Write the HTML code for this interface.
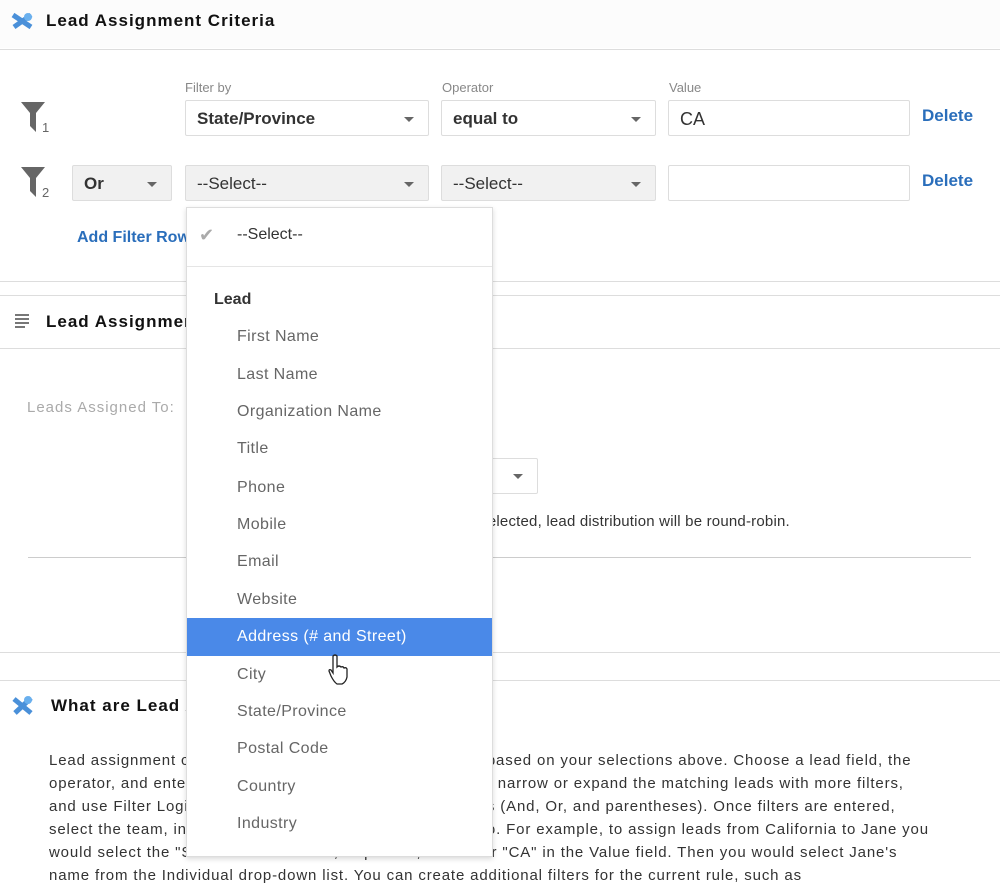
<!DOCTYPE html>
<html><head><style>
body{margin:0;width:1000px;height:877px;overflow:hidden;background:#fff;font-family:"Liberation Sans",Arial,sans-serif;position:relative}
.a{position:absolute}
.hr{position:absolute;left:0;width:1000px;height:1px;background:#ddd}
.sel{position:absolute;height:36px;border:1px solid #ddd;border-radius:2px;box-sizing:border-box;font-size:17px;font-weight:bold;color:#333;padding:8px 11px;background:#fff}
.sel.g{background:#f1f1f1;font-weight:normal;color:#333}
.car{position:absolute;right:14px;top:16px;width:0;height:0;border-left:5px solid transparent;border-right:5px solid transparent;border-top:5px solid #666}
.lbl{position:absolute;font-size:13px;color:#888}
.del{position:absolute;font-size:17px;font-weight:bold;color:#2a6ebb}
.h{position:absolute;font-size:17px;font-weight:bold;color:#111;letter-spacing:1px}
.it{position:absolute;left:50px;font-size:16px;color:#666;letter-spacing:0.4px}
p{margin:0;white-space:nowrap}
</style></head><body>
<div class="a" style="left:0;top:0;width:1000px;height:48px;background:#fcfcfc"></div>
<svg class="a" style="left:11px;top:11px" width="24" height="20"><path d="M2 4 L20 16 M20 4 L3 16" stroke="#4a90d9" stroke-width="5"/><circle cx="17" cy="6" r="4" fill="#6ab0ee"/></svg>
<div class="h" style="left:46px;top:11px">Lead Assignment Criteria</div>
<div class="hr" style="top:49px"></div>

<div class="lbl" style="left:185px;top:80px">Filter by</div>
<div class="lbl" style="left:442px;top:80px">Operator</div>
<div class="lbl" style="left:669px;top:80px">Value</div>
<svg class="a" style="left:20px;top:102px" width="34" height="32"><path d="M1 0 H25 L16 11 V30 L10 24 V11 Z" fill="#666"/><text x="22" y="30" font-size="13" fill="#666" font-family="Liberation Sans">1</text></svg>
<div class="sel" style="left:185px;top:100px;width:244px">State/Province<div class="car"></div></div>
<div class="sel" style="left:441px;top:100px;width:215px">equal to<div class="car"></div></div>
<div class="sel" style="left:668px;top:100px;width:242px;font-weight:normal;font-size:18px">CA</div>
<div class="del" style="left:922px;top:106px">Delete</div>

<svg class="a" style="left:20px;top:167px" width="34" height="32"><path d="M1 0 H25 L16 11 V30 L10 24 V11 Z" fill="#666"/><text x="22" y="30" font-size="13" fill="#666" font-family="Liberation Sans">2</text></svg>
<div class="sel g" style="left:72px;top:165px;width:100px;font-weight:bold">Or<div class="car"></div></div>
<div class="sel g" style="left:185px;top:165px;width:244px">--Select--<div class="car"></div></div>
<div class="sel g" style="left:441px;top:165px;width:215px">--Select--<div class="car"></div></div>
<div class="sel" style="left:668px;top:165px;width:242px"></div>
<div class="del" style="left:922px;top:171px">Delete</div>
<div class="del" style="left:77px;top:229px;font-size:16px">Add Filter Row</div>
<div class="hr" style="top:281px"></div>
<div class="hr" style="top:295px"></div>

<svg class="a" style="left:14px;top:313px" width="18" height="18"><rect x="1" y="1" width="14" height="2" fill="#777"/><rect x="1" y="5" width="14" height="2" fill="#777"/><rect x="1" y="9" width="14" height="2" fill="#777"/><rect x="1" y="13" width="10" height="2" fill="#777"/></svg>
<div class="h" style="left:46px;top:312px">Lead Assignment Rules</div>
<div class="hr" style="top:348px"></div>
<div class="a" style="left:27px;top:399px;font-size:15px;color:#aaa;letter-spacing:1px">Leads Assigned To:</div>
<div class="a" style="left:400px;top:458px;width:138px;height:36px;border:1px solid #ddd;box-sizing:border-box;border-radius:2px"><div class="car" style="top:15px"></div></div>
<div class="a" style="left:400px;top:513px;font-size:15px;color:#333;letter-spacing:0.2px">If a team is selected, lead distribution will be round-robin.</div>
<div class="a" style="left:28px;top:557px;width:943px;height:1px;background:#ccc"></div>
<div class="hr" style="top:652px"></div>
<div class="hr" style="top:680px"></div>

<svg class="a" style="left:11px;top:695px" width="24" height="22"><path d="M3 4 L20 18 M20 3 L4 18" stroke="#4a90d9" stroke-width="5"/><circle cx="17" cy="5" r="4" fill="#6ab0ee"/></svg>
<div class="h" style="left:51px;top:696px">What are Lead Assignment Rules?</div>
<div class="a" style="left:49px;top:749px;width:940px;font-size:15px;line-height:23px;color:#333;letter-spacing:0.85px">
<p>Lead assignment criteria filter leads and then assign them based on your selections above. Choose a lead field, the</p>
<p>operator, and enter a value. You can click Add Filter Row to narrow or expand the matching leads with more filters,</p>
<p>and use Filter Logic to combine filters with logical operators (And, Or, and parentheses). Once filters are entered,</p>
<p>select the team, individual or both the leads are assigned to. For example, to assign leads from California to Jane you</p>
<p>would select the "State/Province" field, "equal to", and enter "CA" in the Value field. Then you would select Jane's</p>
<p>name from the Individual drop-down list. You can create additional filters for the current rule, such as</p>
</div>

<div class="a" style="left:186px;top:207px;width:307px;height:650px;background:#fff;border:1px solid #ddd;box-sizing:border-box;box-shadow:0 2px 5px rgba(0,0,0,.15)">
<div class="a" style="left:12px;top:17px;font-size:18px;color:#aaa">✔</div>
<div class="a" style="left:50px;top:18px;font-size:16px;color:#333">--Select--</div>
<div class="a" style="left:0;top:58px;width:305px;height:1px;background:#e5e5e5"></div>
<div class="a" style="left:27px;top:83px;font-size:16px;font-weight:bold;color:#333">Lead</div>
<div class="it" style="top:120px">First Name</div>
<div class="it" style="top:158px">Last Name</div>
<div class="it" style="top:195px">Organization Name</div>
<div class="it" style="top:232px">Title</div>
<div class="it" style="top:271px">Phone</div>
<div class="it" style="top:308px">Mobile</div>
<div class="it" style="top:345px">Email</div>
<div class="it" style="top:383px">Website</div>
<div class="a" style="left:0;top:410px;width:305px;height:38px;background:#4a89e8"></div>
<div class="it" style="top:420px;color:#fff">Address (# and Street)</div>
<div class="it" style="top:458px">City</div>
<div class="it" style="top:495px">State/Province</div>
<div class="it" style="top:532px">Postal Code</div>
<div class="it" style="top:570px">Country</div>
<div class="it" style="top:607px">Industry</div>
</div>
<svg class="a" style="left:326px;top:654px" width="24" height="32"><path d="M7 2 Q9 0 11 2 V13 Q13 11 15 13 Q17 12 18 14 Q20 13 21 15 V23 Q20 28 16 30 H11 Q8 28 5 22 L3 17 Q3 15 5 16 L7 19 Z" fill="#fff" stroke="#222" stroke-width="1.3"/></svg>
</body></html>
